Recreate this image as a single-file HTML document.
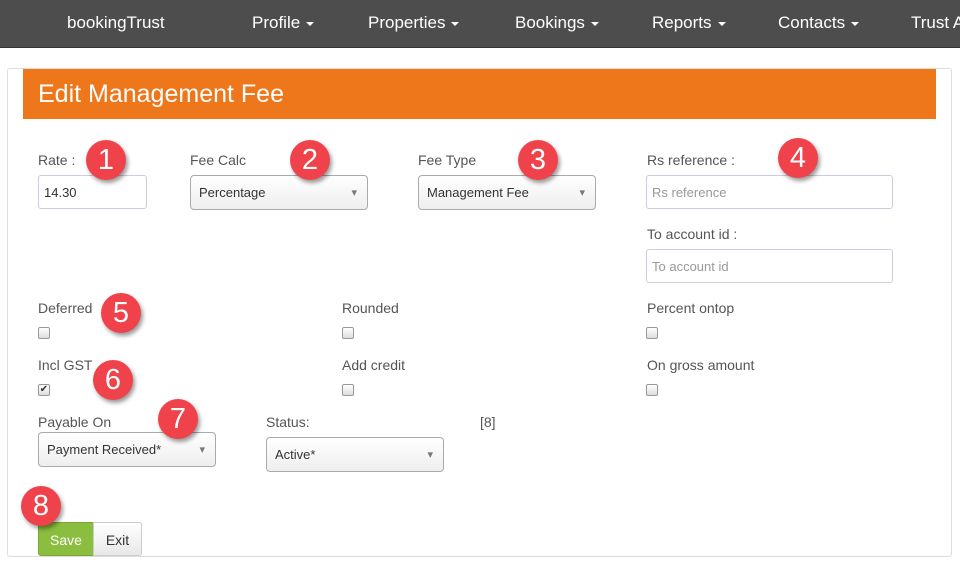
<!DOCTYPE html>
<html><head><meta charset="utf-8"><style>
*{box-sizing:border-box;margin:0;padding:0}
body{width:960px;height:567px;background:#fff;font-family:"Liberation Sans","DejaVu Sans",sans-serif;position:relative;overflow:hidden;color:#555}
.nav{position:absolute;left:0;top:0;width:960px;height:48px;background:#4d4d4d;border-bottom:1px solid #333}
.nav span{position:absolute;top:13px;color:#fff;font-size:17px;white-space:nowrap}
.car{display:inline-block;width:0;height:0;border-left:4px solid transparent;border-right:4px solid transparent;border-top:4px solid #fff;vertical-align:middle;margin-left:6px}
.panel{position:absolute;left:7px;top:68px;width:945px;height:489px;border:1px solid #ddd;border-radius:3px}
.hdr{position:absolute;left:23px;top:69px;width:913px;height:50px;background:#ee771c;color:#fff;font-size:25px;padding:11px 15px}
.a{position:absolute;font-size:14px;color:#555;white-space:nowrap}
.inp{position:absolute;border:1px solid #ccd;border-radius:3px;background:#fff;font-size:13px;padding:9px 5px;color:#333;height:34px}
.inp.ph{color:#999}
.sel{position:absolute;border:1px solid #aaa;border-radius:4px;background:linear-gradient(#fff,#eee);font-size:13px;padding:9px 8px;color:#333;height:35px}
.sel:after{content:"▾";position:absolute;right:10px;top:10px;color:#777;font-size:11px}
.cb{position:absolute;width:12px;height:12px;border:1px solid #999;border-radius:2px;background:linear-gradient(#fff,#ddd);font-size:10px;line-height:10px;text-align:center;color:#333}
.n{position:absolute;width:40px;height:40px;border-radius:50%;background:#f0424a;color:#fff;font-size:29px;text-align:center;line-height:40px;box-shadow:2px 3px 4px rgba(0,0,0,.4)}
.btn{position:absolute;top:522px;height:34px;font-size:14px;padding:9px 0;text-align:center}
</style></head><body>
<div class="nav">
<span style="left:67px">bookingTrust</span>
<span style="left:252px">Profile<i class="car"></i></span>
<span style="left:368px">Properties<i class="car"></i></span>
<span style="left:515px">Bookings<i class="car"></i></span>
<span style="left:652px">Reports<i class="car"></i></span>
<span style="left:778px">Contacts<i class="car"></i></span>
<span style="left:911px">Trust Acc</span>
</div>
<div class="panel"></div>
<div class="hdr">Edit Management Fee</div>

<div class="a" style="left:38px;top:152px">Rate :</div>
<div class="inp" style="left:38px;top:175px;width:109px">14.30</div>
<div class="a" style="left:190px;top:152px">Fee Calc</div>
<div class="sel" style="left:190px;top:175px;width:178px">Percentage</div>
<div class="a" style="left:418px;top:152px">Fee Type</div>
<div class="sel" style="left:418px;top:175px;width:178px">Management Fee</div>
<div class="a" style="left:647px;top:152px">Rs reference :</div>
<div class="inp ph" style="left:646px;top:175px;width:247px">Rs reference</div>
<div class="a" style="left:647px;top:226px">To account id :</div>
<div class="inp ph" style="left:646px;top:249px;width:247px">To account id</div>

<div class="a" style="left:38px;top:300px">Deferred</div>
<div class="cb" style="left:38px;top:327px"></div>
<div class="a" style="left:342px;top:300px">Rounded</div>
<div class="cb" style="left:342px;top:327px"></div>
<div class="a" style="left:647px;top:300px">Percent ontop</div>
<div class="cb" style="left:646px;top:327px"></div>
<div class="a" style="left:38px;top:357px">Incl GST</div>
<div class="cb" style="left:38px;top:384px">✔</div>
<div class="a" style="left:342px;top:357px">Add credit</div>
<div class="cb" style="left:342px;top:384px"></div>
<div class="a" style="left:647px;top:357px">On gross amount</div>
<div class="cb" style="left:646px;top:384px"></div>

<div class="a" style="left:38px;top:414px">Payable On</div>
<div class="sel" style="left:38px;top:432px;width:178px">Payment Received*</div>
<div class="a" style="left:266px;top:414px">Status:</div>
<div class="sel" style="left:266px;top:437px;width:178px">Active*</div>
<div class="a" style="left:480px;top:414px">[8]</div>

<div class="btn" style="left:38px;width:56px;background:#8bbd3f;color:#fff;border:1px solid #7aa835;border-radius:3px 0 0 3px">Save</div>
<div class="btn" style="left:93px;width:49px;background:linear-gradient(#fff,#e8e8e8);color:#333;border:1px solid #ccc;border-radius:0 3px 3px 0">Exit</div>

<div class="n" style="left:86px;top:140px">1</div>
<div class="n" style="left:290px;top:140px">2</div>
<div class="n" style="left:518px;top:140px">3</div>
<div class="n" style="left:778px;top:138px">4</div>
<div class="n" style="left:101px;top:293px">5</div>
<div class="n" style="left:93px;top:360px">6</div>
<div class="n" style="left:158px;top:399px">7</div>
<div class="n" style="left:21px;top:486px">8</div>
</body></html>
